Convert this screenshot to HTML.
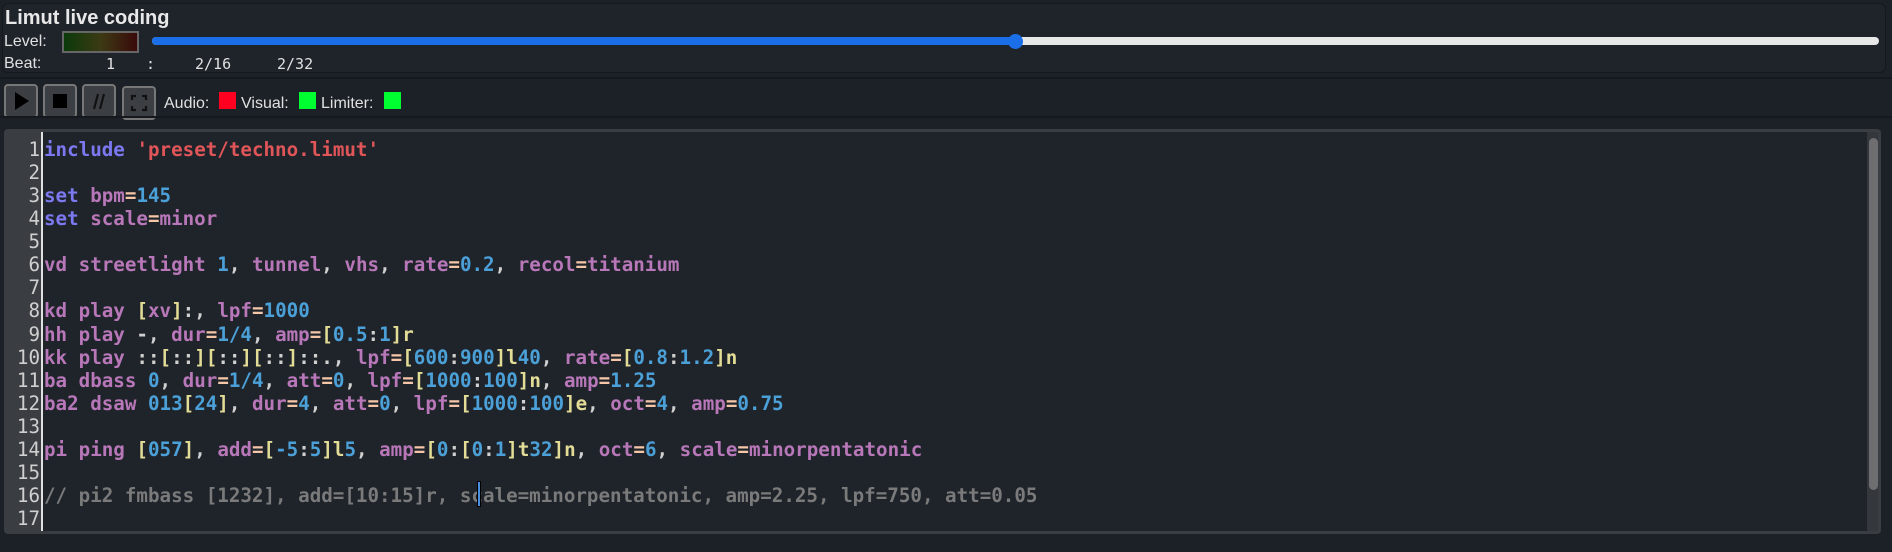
<!DOCTYPE html>
<html><head><meta charset="utf-8"><style>
*{box-sizing:border-box;margin:0;padding:0}
html,body{width:1892px;height:552px;overflow:hidden;background:#1c2127;font-family:"Liberation Sans",sans-serif;color:#e6e6e6;position:relative}
.abs{position:absolute}
.panel{left:2px;top:3px;width:1884px;height:70px;border:1px solid #15191e;border-radius:6px;background:#1f242b}
.title{left:5px;top:7px;font-size:20px;font-weight:bold;color:#e8e8e8}
.lbl{font-size:16px;color:#e0e0e0}
.mono{font-family:"DejaVu Sans Mono","Liberation Mono",monospace;font-size:15px;color:#e0e0e0}
.level{left:62px;top:31px;width:77px;height:22px;border:2px solid #666;background:linear-gradient(90deg,#0a3a0a,#3c3a14,#3a0a0a)}
.track{left:152px;top:37px;width:1727px;height:8px;border-radius:4px;background:#e8e8e8}
.fill{left:152px;top:37px;width:866px;height:8px;border-radius:4px;background:#1a6ee8}
.thumb{left:1008px;top:34px;width:15px;height:15px;border-radius:50%;background:#1a6ee8}
.sep{left:0;width:1892px;height:2px;background:#15191e}
.btn{top:84px;width:34px;height:34px;border:2px solid #777;border-radius:4px;background:#3b3e43}
.sq{top:92px;width:17px;height:17px}
.ed{left:4px;top:129px;width:1877px;height:405px;border:3px solid #3a3d42;border-radius:4px;background:#1f242b;overflow:hidden}
.gut{left:0;top:0;width:36px;height:402px;background:#3a3d42;border-right:2px solid #e0e0e0}
.code{font-family:"DejaVu Sans Mono",monospace;font-weight:bold;font-size:19.2px;line-height:23.07px;white-space:pre;letter-spacing:0}
.nums{left:0;top:6px;width:33px;text-align:right;color:#d0d0d0;font-weight:normal}
.lines{left:37px;top:6px;color:#b877b8}
.k{color:#7c78f0}.s{color:#e05558}.n{color:#4ba0d8}.e{color:#f5c6a8}.b{color:#e2dc96}.w{color:#d0d0d0}.c{color:#7a7a7a}
.sb{left:1860px;top:0;width:14px;height:402px;background:#34373c}
.sbt{left:1862px;top:6px;width:9px;height:352px;border-radius:5px;background:#6e6e70}
</style></head><body>
<div class="abs panel"></div>
<div class="abs title">Limut live coding</div>
<div class="abs lbl" style="left:4px;top:33px">Level:</div>
<div class="abs level"></div>
<div class="abs track"></div><div class="abs fill"></div><div class="abs thumb"></div>
<div class="abs lbl" style="left:4px;top:55px">Beat:</div>
<div class="abs mono" style="left:106px;top:55px">1</div>
<div class="abs mono" style="left:146px;top:55px">:</div>
<div class="abs mono" style="left:195px;top:55px">2/16</div>
<div class="abs mono" style="left:277px;top:55px">2/32</div>
<div class="abs sep" style="top:77px"></div>
<div class="abs btn" style="left:4px"><svg width="30" height="30"><path d="M9 6 L23 15 L9 24Z" fill="#000"/></svg></div>
<div class="abs btn" style="left:43px"><svg width="30" height="30"><rect x="8" y="8" width="14" height="14" fill="#000"/></svg></div>
<div class="abs btn" style="left:82px"><svg width="30" height="30"><path d="M14 8 L10 23 M20 8 L16 23" stroke="#111" stroke-width="2.2"/></svg></div>
<div class="abs btn" style="left:122px;top:86px"><svg width="30" height="30"><path d="M8 12V8H12M18 8H22V12M22 18V22H18M12 22H8V18" stroke="#111" stroke-width="2.2" fill="none"/></svg></div>
<div class="abs lbl" style="left:164px;top:95px">Audio:</div>
<div class="abs sq" style="left:219px;background:#ff0020"></div>
<div class="abs lbl" style="left:241px;top:95px">Visual:</div>
<div class="abs sq" style="left:299px;background:#00ff30"></div>
<div class="abs lbl" style="left:321px;top:95px">Limiter:</div>
<div class="abs sq" style="left:384px;background:#00ff30"></div>
<div class="abs sep" style="top:116px"></div>
<div class="abs ed">
<div class="abs gut"></div>
<div class="abs code nums">1
2
3
4
5
6
7
8
9
10
11
12
13
14
15
16
17
18</div>
<div class="abs code lines"><span class="k">include</span> <span class="s">'preset/techno.limut'</span>

<span class="k">set</span> bpm<span class="e">=</span><span class="n">145</span>
<span class="k">set</span> scale<span class="e">=</span>minor

vd streetlight <span class="n">1</span><span class="w">,</span> tunnel<span class="w">,</span> vhs<span class="w">,</span> rate<span class="e">=</span><span class="n">0.2</span><span class="w">,</span> recol<span class="e">=</span>titanium

kd play <span class="b">[</span>xv<span class="b">]</span><span class="w">:,</span> lpf<span class="e">=</span><span class="n">1000</span>
hh play <span class="w">-,</span> dur<span class="e">=</span><span class="n">1/4</span><span class="w">,</span> amp<span class="e">=</span><span class="b">[</span><span class="n">0.5</span><span class="w">:</span><span class="n">1</span><span class="b">]r</span>
kk play <span class="w">::</span><span class="b">[</span><span class="w">::</span><span class="b">][</span><span class="w">::</span><span class="b">][</span><span class="w">::</span><span class="b">]</span><span class="w">::.,</span> lpf<span class="e">=</span><span class="b">[</span><span class="n">600</span><span class="w">:</span><span class="n">900</span><span class="b">]l</span><span class="n">40</span><span class="w">,</span> rate<span class="e">=</span><span class="b">[</span><span class="n">0.8</span><span class="w">:</span><span class="n">1.2</span><span class="b">]n</span>
ba dbass <span class="n">0</span><span class="w">,</span> dur<span class="e">=</span><span class="n">1/4</span><span class="w">,</span> att<span class="e">=</span><span class="n">0</span><span class="w">,</span> lpf<span class="e">=</span><span class="b">[</span><span class="n">1000</span><span class="w">:</span><span class="n">100</span><span class="b">]n</span><span class="w">,</span> amp<span class="e">=</span><span class="n">1.25</span>
ba2 dsaw <span class="n">013</span><span class="b">[</span><span class="n">24</span><span class="b">]</span><span class="w">,</span> dur<span class="e">=</span><span class="n">4</span><span class="w">,</span> att<span class="e">=</span><span class="n">0</span><span class="w">,</span> lpf<span class="e">=</span><span class="b">[</span><span class="n">1000</span><span class="w">:</span><span class="n">100</span><span class="b">]e</span><span class="w">,</span> oct<span class="e">=</span><span class="n">4</span><span class="w">,</span> amp<span class="e">=</span><span class="n">0.75</span>

pi ping <span class="b">[</span><span class="n">057</span><span class="b">]</span><span class="w">,</span> add<span class="e">=</span><span class="b">[</span><span class="n">-5</span><span class="w">:</span><span class="n">5</span><span class="b">]l</span><span class="n">5</span><span class="w">,</span> amp<span class="e">=</span><span class="b">[</span><span class="n">0</span><span class="w">:</span><span class="b">[</span><span class="n">0</span><span class="w">:</span><span class="n">1</span><span class="b">]t</span><span class="n">32</span><span class="b">]n</span><span class="w">,</span> oct<span class="e">=</span><span class="n">6</span><span class="w">,</span> scale<span class="e">=</span>minorpentatonic

<span class="c">// pi2 fmbass [1232], add=[10:15]r, scale=minorpentatonic, amp=2.25, lpf=750, att=0.05</span>
</div>
<div class="abs" style="left:471px;top:350px;width:2px;height:24px;background:#4a90e0;box-shadow:0 0 0 1px #000"></div>
<div class="abs sb"></div><div class="abs sbt"></div>
</div>
</body></html>
